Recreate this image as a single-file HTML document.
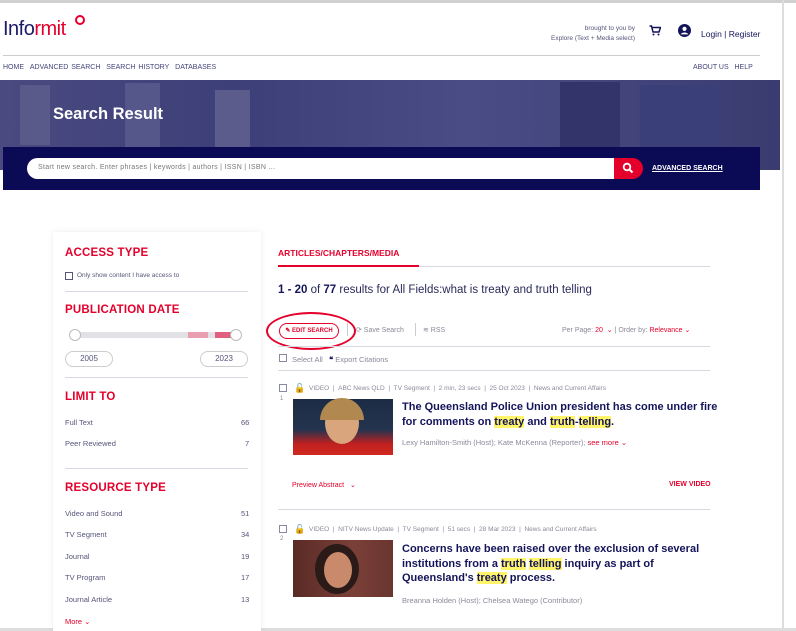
<!DOCTYPE html>
<html><head><meta charset="utf-8"><style>
*{margin:0;padding:0;box-sizing:border-box}
body{width:796px;height:631px;overflow:hidden;background:#fff;font-family:"Liberation Sans",sans-serif;position:relative;color:#2a2a5a}
.a{position:absolute;white-space:nowrap}
.red{color:#e4002b}
.navy{color:#14145a}
.g{color:#8a8a9a}
.h{font-weight:bold;font-size:11.5px;color:#e4002b;letter-spacing:.2px}
.side{font-size:7.5px;color:#55557a}
.hl{background:#fff46a}
.line{position:absolute;height:1px;background:#d8d8e2}
</style></head><body>
<div class="a" style="left:0;top:0;width:796px;height:3px;background:#d0d0d0"></div>
<div class="a" style="left:782px;top:0;width:2px;height:631px;background:#ddd"></div>
<div class="a" style="left:0;top:628px;width:796px;height:3px;background:#ddd"></div>
<!-- header -->
<div class="a" style="left:3px;top:18px;font-size:20px;letter-spacing:-0.5px"><span style="color:#1b1b6a">Info</span><span class="red">rmit</span></div>
<div class="a" style="left:75px;top:15px;width:10px;height:10px;border:2px solid #e4002b;border-radius:50%"></div>
<div class="a" style="left:540px;top:24px;font-size:6.5px;color:#55557a;text-align:right;line-height:10px;width:95px">brought to you by<br>Explore (Text + Media select)</div>
<svg class="a" style="left:649px;top:25px" width="12" height="11" viewBox="0 0 24 22"><path d="M1 2h4l3 12h12l3-9H7" fill="none" stroke="#14145a" stroke-width="3"/><circle cx="9" cy="19" r="2" fill="#14145a"/><circle cx="19" cy="19" r="2" fill="#14145a"/></svg>
<svg class="a" style="left:678px;top:24px" width="13" height="13" viewBox="0 0 20 20"><circle cx="10" cy="10" r="10" fill="#14145a"/><circle cx="10" cy="7.5" r="3.2" fill="#fff"/><path d="M4 16c2-4 10-4 12 0" fill="#fff"/></svg>
<div class="a navy" style="left:701px;top:29px;font-size:8.5px">Login | Register</div>
<div class="line" style="left:3px;top:55px;width:757px;background:#ccc"></div>
<div class="a" style="left:3px;top:64px;font-size:7px;color:#44447a;word-spacing:1px">HOME&nbsp;&nbsp;ADVANCED SEARCH&nbsp;&nbsp;SEARCH HISTORY&nbsp;&nbsp;DATABASES</div>
<div class="a" style="left:693px;top:64px;font-size:7px;color:#44447a">ABOUT US&nbsp;&nbsp;&nbsp;HELP</div>
<!-- hero -->
<div class="a" style="left:0;top:80px;width:780px;height:90px;background:linear-gradient(90deg,#4a4a80 0%,#3d3f78 30%,#4a4c86 60%,#3a3c70 100%)"></div>
<div class="a" style="left:20px;top:85px;width:30px;height:60px;background:#5a5a8a"></div>
<div class="a" style="left:125px;top:83px;width:35px;height:65px;background:#55578a"></div>
<div class="a" style="left:215px;top:90px;width:35px;height:60px;background:#5b5c8c"></div>
<div class="a" style="left:560px;top:82px;width:60px;height:70px;background:#33356a"></div>
<div class="a" style="left:640px;top:85px;width:80px;height:65px;background:#3a3f7a"></div>
<div class="a" style="left:53px;top:105px;font-size:16.5px;font-weight:bold;color:#fff">Search Result</div>
<div class="a" style="left:3px;top:147px;width:757px;height:43px;background:#0b0a55"></div>
<div class="a" style="left:27px;top:158px;width:600px;height:21px;background:#fff;border-radius:11px 0 0 11px"></div>
<div class="a" style="left:38px;top:164px;font-size:7px;color:#777;letter-spacing:.3px">Start new search. Enter phrases | keywords | authors | ISSN | ISBN ...</div>
<div class="a" style="left:614px;top:158px;width:29px;height:21px;background:#e4002b;border-radius:0 11px 11px 0"></div>
<svg class="a" style="left:622px;top:162px" width="12" height="12" viewBox="0 0 12 12"><circle cx="5" cy="5" r="3.3" fill="none" stroke="#fff" stroke-width="1.8"/><path d="M7.5 7.5l3 3" stroke="#fff" stroke-width="2"/></svg>
<div class="a" style="left:652px;top:165px;font-size:7px;font-weight:bold;color:#fff;text-decoration:underline">ADVANCED SEARCH</div>
<!-- sidebar -->
<div class="a" style="left:53px;top:232px;width:208px;height:399px;background:#fff;box-shadow:0 0 6px rgba(0,0,0,.08)"></div>
<div class="a h" style="left:65px;top:247px">ACCESS TYPE</div>
<div class="a" style="left:65px;top:272px;width:8px;height:8px;border:1px solid #55557a"></div>
<div class="a side" style="left:77px;top:272px;font-size:6.5px">Only show content I have access to</div>
<div class="line" style="left:65px;top:291px;width:183px"></div>
<div class="a h" style="left:65px;top:304px">PUBLICATION DATE</div>
<div class="a" style="left:74px;top:332px;width:164px;height:6px;background:#e2e2e6"></div>
<div class="a" style="left:188px;top:332px;width:20px;height:6px;background:#e8a0b0"></div>
<div class="a" style="left:215px;top:332px;width:20px;height:6px;background:#e06080"></div>
<div class="a" style="left:69px;top:329px;width:12px;height:12px;border-radius:50%;background:#fff;border:1px solid #bbb"></div>
<div class="a" style="left:230px;top:329px;width:12px;height:12px;border-radius:50%;background:#fff;border:1px solid #bbb"></div>
<div class="a side" style="left:65px;top:351px;width:48px;height:16px;border:1px solid #ccc;border-radius:8px;text-align:center;line-height:14px;font-size:8px">2005</div>
<div class="a side" style="left:200px;top:351px;width:48px;height:16px;border:1px solid #ccc;border-radius:8px;text-align:center;line-height:14px;font-size:8px">2023</div>
<div class="line" style="left:65px;top:377px;width:183px"></div>
<div class="a h" style="left:65px;top:391px">LIMIT TO</div>
<div class="a side" style="left:65px;top:418px">Full Text</div><div class="a side" style="left:241px;top:418px">66</div>
<div class="a side" style="left:65px;top:439px">Peer Reviewed</div><div class="a side" style="left:245px;top:439px">7</div>
<div class="line" style="left:65px;top:468px;width:183px"></div>
<div class="a h" style="left:65px;top:482px">RESOURCE TYPE</div>
<div class="a side" style="left:65px;top:509px">Video and Sound</div><div class="a side" style="left:241px;top:509px">51</div>
<div class="a side" style="left:65px;top:530px">TV Segment</div><div class="a side" style="left:241px;top:530px">34</div>
<div class="a side" style="left:65px;top:552px">Journal</div><div class="a side" style="left:241px;top:552px">19</div>
<div class="a side" style="left:65px;top:573px">TV Program</div><div class="a side" style="left:241px;top:573px">17</div>
<div class="a side" style="left:65px;top:595px">Journal Article</div><div class="a side" style="left:241px;top:595px">13</div>
<div class="a red" style="left:65px;top:617px;font-size:7.5px">More &#8964;</div>
<!-- main -->
<div class="a red" style="left:278px;top:248px;font-size:8.5px;font-weight:bold">ARTICLES/CHAPTERS/MEDIA</div>
<div class="line" style="left:278px;top:266px;width:432px"></div>
<div class="a" style="left:278px;top:265px;width:141px;height:2px;background:#e4002b"></div>
<div class="a" style="left:278px;top:284px;font-size:11.5px;color:#2a2a5a"><b class="navy">1 - 20</b> of <b class="navy">77</b> results for All Fields:what is treaty and truth telling</div>
<div class="a" style="left:266px;top:312px;width:90px;height:38px;border:2.5px solid #e4002b;border-radius:50%"></div>
<div class="a red" style="left:279px;top:323px;width:60px;height:16px;border:1px solid #e4002b;border-radius:8px;font-size:6px;font-weight:bold;text-align:center;line-height:14px">&#9998; EDIT SEARCH</div>
<div class="a" style="left:347px;top:323px;width:1px;height:13px;background:#ccc"></div>
<div class="a g" style="left:356px;top:326px;font-size:7px">&#10227; Save Search</div>
<div class="a" style="left:415px;top:323px;width:1px;height:13px;background:#ccc"></div>
<div class="a g" style="left:423px;top:326px;font-size:7px">&#8779; RSS</div>
<div class="a g" style="left:562px;top:326px;font-size:7px">Per Page: <span class="red">20</span>&nbsp;&nbsp;<span class="red">&#8964;</span> | Order by: <span class="red">Relevance &#8964;</span></div>
<div class="line" style="left:278px;top:346px;width:432px"></div>
<div class="a" style="left:279px;top:354px;width:8px;height:8px;border:1px solid #8888a0"></div>
<div class="a g" style="left:292px;top:355px;font-size:7.5px">Select All&nbsp;&nbsp;&nbsp;<b style="color:#14145a">&#10077;</b> Export Citations</div>
<div class="line" style="left:278px;top:370px;width:432px"></div>
<!-- result 1 -->
<div class="a" style="left:279px;top:384px;width:8px;height:8px;border:1px solid #8888a0"></div>
<div class="a g" style="left:280px;top:396px;font-size:6px">1</div>
<div class="a" style="left:294px;top:383px;font-size:9px;color:#6c3">&#128275;</div>
<div class="a g" style="left:309px;top:385px;font-size:6.5px">VIDEO&nbsp; | &nbsp;ABC News QLD&nbsp; | &nbsp;TV Segment&nbsp; | &nbsp;2 min, 23 secs&nbsp; | &nbsp;25 Oct 2023&nbsp; | &nbsp;News and Current Affairs</div>
<div class="a" style="left:293px;top:399px;width:100px;height:56px;background:linear-gradient(180deg,#1c2c45 0%,#24344e 55%,#c02020 80%,#d02a20 100%)"></div>
<div class="a" style="left:325px;top:402px;width:34px;height:42px;border-radius:50%;background:#d9a57c"></div>
<div class="a" style="left:320px;top:398px;width:44px;height:22px;border-radius:22px 22px 0 0;background:#b08850"></div>
<div class="a" style="left:402px;top:400px;font-size:11px;font-weight:bold;color:#14145a;line-height:14.5px">The Queensland Police Union president has come under fire<br>for comments on <span class="hl">treaty</span> and <span class="hl">truth</span>-<span class="hl">telling</span>.</div>
<div class="a g" style="left:402px;top:438px;font-size:7.5px">Lexy Hamilton-Smith (Host); Kate McKenna (Reporter); <span class="red">see more &#8964;</span></div>
<div class="a red" style="left:292px;top:481px;font-size:7px">Preview Abstract&nbsp;&nbsp;&nbsp;&#8964;</div>
<div class="a red" style="left:669px;top:481px;font-size:7px;font-weight:bold">VIEW VIDEO</div>
<div class="line" style="left:278px;top:509px;width:432px"></div>
<!-- result 2 -->
<div class="a" style="left:279px;top:525px;width:8px;height:8px;border:1px solid #8888a0"></div>
<div class="a g" style="left:280px;top:536px;font-size:6px">2</div>
<div class="a" style="left:294px;top:524px;font-size:9px;color:#6c3">&#128275;</div>
<div class="a g" style="left:309px;top:526px;font-size:6.5px">VIDEO&nbsp; | &nbsp;NITV News Update&nbsp; | &nbsp;TV Segment&nbsp; | &nbsp;51 secs&nbsp; | &nbsp;28 Mar 2023&nbsp; | &nbsp;News and Current Affairs</div>
<div class="a" style="left:293px;top:540px;width:100px;height:57px;background:linear-gradient(90deg,#5a2a25,#7a4038 60%,#6a3530)"></div>
<div class="a" style="left:315px;top:544px;width:44px;height:50px;border-radius:50%;background:#2a1a18"></div>
<div class="a" style="left:324px;top:552px;width:28px;height:36px;border-radius:50%;background:#c88a6a"></div>
<div class="a" style="left:402px;top:542px;font-size:11px;font-weight:bold;color:#14145a;line-height:14.5px">Concerns have been raised over the exclusion of several<br>institutions from a <span class="hl">truth</span> <span class="hl">telling</span> inquiry as part of<br>Queensland's <span class="hl">treaty</span> process.</div>
<div class="a g" style="left:402px;top:596px;font-size:7.5px">Breanna Holden (Host); Chelsea Watego (Contributor)</div>
</body></html>
